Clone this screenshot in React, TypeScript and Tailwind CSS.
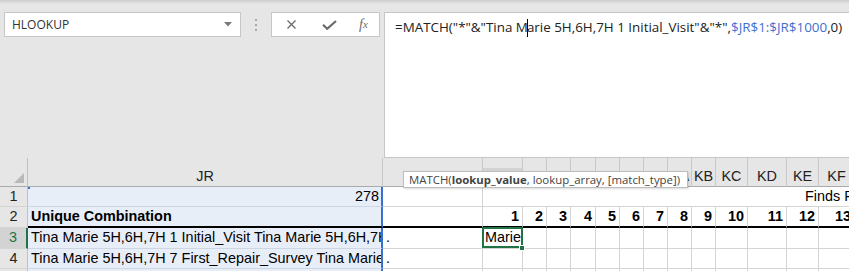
import type { ReactNode } from 'react';

const GRID = 'border-[#d4d4d4]';

type Col = { key: string; w: number };

const COLS: Col[] = [
  { key: 'JR', w: 355 },
  { key: 'JS', w: 100 },
  { key: 'JT', w: 40 },
  { key: 'JU', w: 24 },
  { key: 'JV', w: 24 },
  { key: 'JW', w: 25 },
  { key: 'JX', w: 24 },
  { key: 'JY', w: 24 },
  { key: 'JZ', w: 24 },
  { key: 'KA', w: 24 },
  { key: 'KB', w: 24 },
  { key: 'KC', w: 32 },
  { key: 'KD', w: 39 },
  { key: 'KE', w: 32 },
  { key: 'KF', w: 36 },
];

function RowHeader({ n, active }: { n: number; active?: boolean }) {
  return (
    <div
      className={`w-[28px] shrink-0 h-full flex items-center justify-center border-b border-b-[#d4d4d4] ${
        active ? 'bg-[#d3d3d3] text-[#217346] border-r-2 border-r-[#217346]' : 'bg-[#e6e6e6] text-[#222] border-r border-r-[#c0c0c0]'
      }`}
    >
      {n}
    </div>
  );
}

function Cell({ w, className = '', children }: { w: number; className?: string; children?: ReactNode }) {
  return (
    <div
      style={{ width: w }}
      className={`shrink-0 h-full flex items-center overflow-hidden whitespace-nowrap border-r border-b ${GRID} ${className}`}
    >
      {children}
    </div>
  );
}

function JrCell({ className = '', children }: { className?: string; children?: ReactNode }) {
  return (
    <div
      className={`relative w-[355px] shrink-0 h-full flex items-center overflow-hidden whitespace-nowrap bg-[#e8eef8] border-r-2 border-r-[#3a6fd0] ${className}`}
    >
      {children}
    </div>
  );
}

function Toolbar() {
  return (
    <div className="h-[158px] flex flex-col font-['Open_Sans',sans-serif]">
      <div className="h-[4px] bg-gradient-to-b from-[#cdcdcd] to-[#e6e6e6]" />
      <div className="flex pt-[8px] flex-1">
        <div className="ml-[4px] w-[237px] h-[25px] bg-white border border-[#c6c6c6] flex items-center justify-between pl-[7px] pr-[8px] text-[12px] text-[#333]">
          <span>HLOOKUP</span>
          <svg width="8" height="5" viewBox="0 0 8 5">
            <path d="M0 0 L8 0 L4 4.5 Z" fill="#7a7a7a" />
          </svg>
        </div>
        <div className="w-[30px] h-[25px] flex flex-col items-center justify-center gap-[3px]">
          <span className="w-[2px] h-[2px] bg-[#a8a8a8]" />
          <span className="w-[2px] h-[2px] bg-[#a8a8a8]" />
          <span className="w-[2px] h-[2px] bg-[#a8a8a8]" />
        </div>
        <div className="w-[109px] h-[25px] bg-white border border-[#c6c6c6] flex">
          <div className="w-[38px] flex items-center justify-center">
            <svg width="9" height="9" viewBox="0 0 9 9">
              <path d="M0.5 0.5 L8.5 8.5 M8.5 0.5 L0.5 8.5" stroke="#6b6b6b" strokeWidth="1.3" />
            </svg>
          </div>
          <div className="w-[38px] flex items-center justify-center">
            <svg width="15" height="10" viewBox="0 0 15 10">
              <path d="M1 4.8 L5.2 8.8 L14 1" stroke="#6b6b6b" strokeWidth="2.2" fill="none" />
            </svg>
          </div>
          <div className="w-[31px] flex items-center justify-center font-['Liberation_Serif',serif] italic text-[#6b6b6b]">
            <span className="text-[14px]">f</span>
            <span className="text-[11px]">x</span>
          </div>
        </div>
        <div className="ml-[4px] flex-1 h-[146px] bg-white border-l border-t border-b border-[#c6c6c6] pl-[10px] pt-[6px] text-[13.4px] leading-[17px] text-[#222] whitespace-nowrap">
          =MATCH("*"&"Tina M
          <span className="inline-block w-px h-[18px] bg-black align-top -mx-px" />
          arie 5H,6H,7H 1 Initial_Visit"&"*",
          <span className="text-[#3f6fd1]">$JR$1:$JR$1000</span>,0)
        </div>
      </div>
    </div>
  );
}

export default function App() {
  const nums = Array.from({ length: 13 }, (_, i) => i + 1);

  return (
    <div className="relative w-[849px] h-[271px] overflow-hidden bg-[#e6e6e6]">
      <Toolbar />

      <div className="font-['Liberation_Sans',Arial,sans-serif] text-[14.4px] text-black">
        {/* column headers */}
        <div className="flex h-[29px]">
          <div className="w-[28px] shrink-0 h-full border-r border-b border-r-[#c0c0c0] border-b-[#ababab] flex items-end justify-end pr-[3px] pb-[3px]">
            <svg width="10" height="10" viewBox="0 0 10 10">
              <path d="M10 0 L10 10 L0 10 Z" fill="#b9b9b9" />
            </svg>
          </div>
          {COLS.map((c) => (
            <div
              key={c.key}
              style={{ width: c.w }}
              className="shrink-0 h-full flex flex-col border-r border-b border-r-[#c8c8c8] border-b-[#ababab] text-[#222] bg-[#e6e6e6]"
            >
              <div className="h-[10px]" />
              <div
                className={`flex-1 flex items-center justify-center overflow-hidden whitespace-nowrap ${
                  c.key === 'JT' ? 'bg-[#d3d3d3]' : ''
                }`}
              >
                {c.key}
              </div>
            </div>
          ))}
        </div>

        {/* row 1 */}
        <div className="flex h-[20px]">
          <RowHeader n={1} />
          <JrCell className="justify-end pr-[2px] border-b border-b-[#cfd6e3]">
            <span className="absolute left-0 top-0 w-[2px] h-[2px] bg-[#3a6fd0]" />
            278
          </JrCell>
          <Cell w={100} className="bg-white" />
          <div className={`flex-1 h-full bg-white border-b ${GRID} overflow-hidden whitespace-nowrap flex items-center pl-[322px]`}>
            Finds Position
          </div>
        </div>

        {/* row 2 */}
        <div className="flex h-[21px]">
          <RowHeader n={2} />
          <JrCell className="font-bold pl-[3px] border-b-2 border-b-black">Unique Combination</JrCell>
          <Cell w={100} className="bg-white border-b-2 border-b-black" />
          {COLS.slice(2).map((c, i) => (
            <Cell key={c.key} w={c.w} className="bg-white justify-end pr-[3px] font-bold border-b-2 border-b-black">
              {nums[i]}
            </Cell>
          ))}
        </div>

        {/* row 3 */}
        <div className="flex h-[21px]">
          <RowHeader n={3} active />
          <JrCell className="pl-[3px] border-b border-b-[#cfd6e3]">
            Tina Marie 5H,6H,7H 1 Initial_Visit Tina Marie 5H,6H,7H 1 Initial_Visit
          </JrCell>
          <Cell w={100} className="bg-white pl-[3px]">.</Cell>
          {COLS.slice(2).map((c, i) =>
            i === 0 ? (
              <div
                key={c.key}
                style={{ width: c.w }}
                className={`relative z-10 shrink-0 h-full flex items-center whitespace-nowrap bg-white border-r border-b ${GRID} pl-[2px]`}
              >
                Marie
                <span className="absolute -left-[1px] -top-[1px] -right-[1px] bottom-0 border-2 border-[#217346]" />
                <span className="absolute -right-[3px] -bottom-[3px] w-[6px] h-[6px] bg-[#217346] border border-white" />
              </div>
            ) : (
              <Cell key={c.key} w={c.w} className="bg-white" />
            ),
          )}
        </div>

        {/* row 4 */}
        <div className="flex h-[20px]">
          <RowHeader n={4} />
          <JrCell className="pl-[3px] border-b border-b-[#cfd6e3]">
            Tina Marie 5H,6H,7H 7 First_Repair_Survey Tina Marie 5H,6H,7H
          </JrCell>
          <Cell w={100} className="bg-white pl-[3px]">.</Cell>
          {COLS.slice(2).map((c) => (
            <Cell key={c.key} w={c.w} className="bg-white" />
          ))}
        </div>

        {/* row 5 */}
        <div className="flex h-[20px]">
          <RowHeader n={5} />
          <JrCell />
          {COLS.slice(1).map((c) => (
            <Cell key={c.key} w={c.w} className="bg-white" />
          ))}
        </div>
      </div>

      {/* function tooltip */}
      <div className="absolute left-[403px] top-[171px] w-[285px] h-[17px] bg-white border border-[#bdbdbd] shadow-[1px_1px_2px_rgba(0,0,0,0.15)] flex items-center pl-[5px] font-['Open_Sans',sans-serif] text-[11.4px] text-[#444] whitespace-nowrap">
        MATCH(<b className="font-bold">lookup_value</b>, lookup_array, [match_type])
      </div>
    </div>
  );
}
